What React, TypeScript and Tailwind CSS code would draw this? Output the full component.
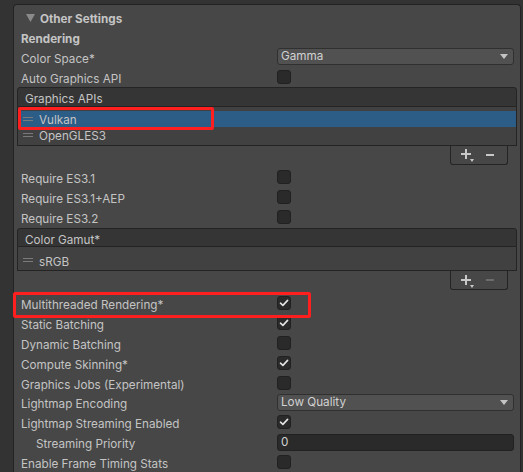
import React from 'react';

const FONT = { fontFamily: 'Inter, "Noto Sans", "Liberation Sans", sans-serif' };

const Checkbox: React.FC<{ checked?: boolean }> = ({ checked }) => (
  <div className="w-[14px] h-[14px] rounded-[3px] bg-[#2a2a2a] border border-[#212121] flex items-center justify-center">
    {checked && (
      <svg width="10" height="8" viewBox="0 0 10 8">
        <path d="M1.5 4.2 L3.9 6.4 L8.6 1.4" fill="none" stroke="#e4e4e4" strokeWidth="1.6" strokeLinecap="round" strokeLinejoin="round" />
      </svg>
    )}
  </div>
);

const Dropdown: React.FC<{ value: string }> = ({ value }) => (
  <div className="w-full h-[17px] rounded-[3px] bg-[#515151] border border-[#303030] flex items-center justify-between pl-[3px] pr-[5px]">
    <span className="text-[11.7px] text-[#d2d2d2] leading-none mt-[1px]">{value}</span>
    <svg width="8" height="5" viewBox="0 0 8 5">
      <path d="M0 0 H8 L4 5 Z" fill="#c4c4c4" />
    </svg>
  </div>
);

const Row: React.FC<{ label: string; bold?: boolean; indent?: boolean; children?: React.ReactNode }> = ({ label, bold, indent, children }) => (
  <div className="h-[20px] flex items-center pl-[4px] pr-[3px]">
    <div className={`w-[256px] shrink-0 mt-[4px] leading-[14px] text-[11.7px] text-[#c4c4c4] ${bold ? 'font-bold' : ''} ${indent ? 'pl-[15px]' : ''}`}>{label}</div>
    <div className="flex-1 flex items-center">{children}</div>
  </div>
);

const Handle = () => (
  <div className="w-[10px] flex flex-col gap-[2px] mr-[6px]">
    <div className="h-[1px] bg-[#7a7a7a]" />
    <div className="h-[1px] bg-[#7a7a7a]" />
  </div>
);

const ListBox: React.FC<{ title: string; items: { name: string; selected?: boolean }[]; minusDim?: boolean; bodyClass: string; headerClass: string }> = ({ title, items, minusDim, bodyClass, headerClass }) => (
  <div className="flex flex-col">
    <div className={`${headerClass} rounded-t-[3px] bg-[#353535] border border-[#242424] flex items-center pl-[7px]`}>
      <span className="mt-[4px] leading-[14px] text-[11.7px] text-[#c4c4c4]">{title}</span>
    </div>
    <div className={`${bodyClass} bg-[#414141] border-x border-b border-[#242424] flex flex-col`}>
      {items.map((it) => (
        <div key={it.name} className={`h-[16px] flex items-center pl-[5px] ${it.selected ? 'bg-[#2c5d87]' : ''}`}>
          <Handle />
          <span className="mt-[3px] leading-[14px] text-[11.7px] text-[#c4c4c4]">{it.name}</span>
        </div>
      ))}
    </div>
    <div className="flex justify-end pr-[9px]">
      <div className="w-[58px] h-[19px] border-x border-b border-[#242424] rounded-b-[3px] flex items-center pl-[10px] gap-[14px]">
        <div className="relative w-[11px] h-[11px]">
          <div className="absolute left-[4px] top-0 w-[2px] h-[10px] bg-[#c8c8c8]" />
          <div className="absolute left-0 top-[4px] w-[10px] h-[2px] bg-[#c8c8c8]" />
          <svg className="absolute left-[9px] top-[10px]" width="4" height="3" viewBox="0 0 4 3">
            <path d="M0 0 H4 L2 3 Z" fill="#c8c8c8" />
          </svg>
        </div>
        <div className={`w-[8px] h-[2px] ${minusDim ? 'bg-[#6c6c6c]' : 'bg-[#c8c8c8]'}`} />
      </div>
    </div>
  </div>
);

export default function App() {
  return (
    <div className="relative w-[523px] h-[472px] overflow-hidden bg-[#333333] pt-[4px] pl-[13px] pr-[2px] flex" style={FONT}>
      <div className="flex-1 bg-[#474747] border-l border-t border-r border-[#232323] rounded-t-[4px] pt-[2px] px-[3px] flex flex-col">
        <div className="h-[20px] flex items-center pl-[9px]">
          <svg width="9" height="8" viewBox="0 0 9 8" className="mr-[5px] mt-[2px]">
            <path d="M0 0 H9 L4.5 8 Z" fill="#8a8a8a" />
          </svg>
          <span className="mt-[4px] leading-[14px] text-[11.7px] font-bold text-[#c4c4c4]">Other Settings</span>
        </div>
        <Row label="Rendering" bold />
        <Row label="Color Space*">
          <Dropdown value="Gamma" />
        </Row>
        <Row label="Auto Graphics API">
          <Checkbox />
        </Row>
        <ListBox
          title="Graphics APIs"
          headerClass="h-[20px]"
          bodyClass="pt-[4px] pb-[2px]"
          items={[{ name: 'Vulkan', selected: true }, { name: 'OpenGLES3' }]}
        />
        <div className="h-[3px]" />
        <Row label="Require ES3.1">
          <Checkbox />
        </Row>
        <Row label="Require ES3.1+AEP">
          <Checkbox />
        </Row>
        <Row label="Require ES3.2">
          <Checkbox />
        </Row>
        <div className="h-[1px]" />
        <ListBox
          title="Color Gamut*"
          headerClass="h-[19px]"
          bodyClass="pt-[5px] pb-[2px]"
          items={[{ name: 'sRGB' }]}
          minusDim
        />
        <div className="h-[3px]" />
        <Row label="Multithreaded Rendering*">
          <Checkbox checked />
        </Row>
        <Row label="Static Batching">
          <Checkbox checked />
        </Row>
        <Row label="Dynamic Batching">
          <Checkbox />
        </Row>
        <Row label="Compute Skinning*">
          <Checkbox checked />
        </Row>
        <Row label="Graphics Jobs (Experimental)">
          <Checkbox />
        </Row>
        <Row label="Lightmap Encoding">
          <Dropdown value="Low Quality" />
        </Row>
        <Row label="Lightmap Streaming Enabled">
          <Checkbox checked />
        </Row>
        <Row label="Streaming Priority" indent>
          <div className="w-full h-[17px] rounded-[3px] bg-[#2a2a2a] border border-[#212121] flex items-center pl-[3px]">
            <span className="mt-[1px] leading-none text-[11.7px] text-[#d2d2d2]">0</span>
          </div>
        </Row>
        <Row label="Enable Frame Timing Stats">
          <Checkbox />
        </Row>
      </div>

      <div className="absolute left-[18px] top-[107px] w-[196px] h-[23px] border-[3px] border-[#ff1f1f] rounded-[2px]" />
      <div className="absolute left-[13px] top-[292px] w-[298px] h-[26px] border-[3px] border-[#ff1f1f] rounded-[2px]" />
    </div>
  );
}
